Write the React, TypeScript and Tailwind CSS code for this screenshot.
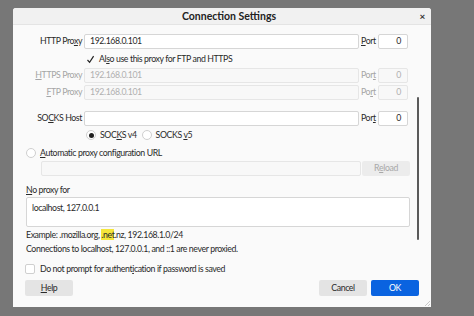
const U = ({ children }: { children: string }) => <span className="underline underline-offset-[1px]">{children}</span>;

const Field = ({ value = '', disabled = false, className = '' }: { value?: string; disabled?: boolean; className?: string }) => (
  <div
    className={`h-[15px] flex items-center px-[5px] border rounded-[2px] ${
      disabled ? 'bg-[#f8f8f8] border-[#e6e6e6] text-[#b0b0b0]' : 'bg-white border-[#d6d6d6] text-[#2a2a2a]'
    } ${className}`}
  >
    {value}
  </div>
);

const PortField = ({ disabled = false }: { disabled?: boolean }) => (
  <div
    className={`w-[30px] h-[15px] flex items-center justify-end pr-[6px] border rounded-[2px] ${
      disabled ? 'bg-[#f8f8f8] border-[#e6e6e6] text-[#b0b0b0]' : 'bg-white border-[#d6d6d6] text-[#2a2a2a]'
    }`}
  >
    0
  </div>
);

const ProxyRow = ({ label, value, disabled = false, port }: { label: React.ReactNode; value: string; disabled?: boolean; port: React.ReactNode }) => (
  <div className="flex items-center h-[15px]">
    <div className={`w-[71px] pr-[2px] text-right ${disabled ? 'text-[#a5a5a5]' : 'text-[#2a2a2a]'}`}>{label}</div>
    <Field value={value} disabled={disabled} className="w-[275px]" />
    <div className={`w-[19px] pl-[2px] ${disabled ? 'text-[#a5a5a5]' : 'text-[#2a2a2a]'}`}>{port}</div>
    <PortField disabled={disabled} />
  </div>
);

const Radio = ({ checked = false }: { checked?: boolean }) => (
  <div className="w-[10px] h-[10px] rounded-full border border-[#cfcfcf] bg-white flex items-center justify-center">
    {checked && <div className="w-[5px] h-[5px] rounded-full bg-[#1e1e1e]" />}
  </div>
);

export default function App() {
  return (
    <div
      className="w-[474px] h-[316px] bg-[#777777] pt-[8px] pl-[13px] overflow-hidden text-[8.75px] leading-none tracking-[-0.4px]"
      style={{ fontFamily: 'Lato, "Noto Sans", sans-serif' }}
    >
      <div className="w-[418px] h-[299px] bg-[#fafafa] rounded-t-[3px] flex flex-col relative">
        {/* title bar */}
        <div className="h-[17px] bg-[#f1f1f1] border-b border-[#e4e4e4] rounded-t-[3px] flex items-center justify-center relative">
          <span className="font-bold text-[10.5px] tracking-[0px] text-[#222] ml-[14px]">Connection Settings</span>
          <span className="absolute right-[6px] top-[3px] text-[10px] font-bold text-[#333]">×</span>
        </div>

        {/* scrollbar */}
        <div className="absolute left-[404px] top-[89px] w-[2px] h-[143px] bg-[#5a5a5a] rounded-full" />

        <div className="flex flex-col">
          <div className="mt-[9px]">
            <ProxyRow label={<>HTTP Pro<U>x</U>y</>} value="192.168.0.101" port={<><U>P</U>ort</>} />
          </div>

          <div className="mt-[4px] h-[12px] flex items-center pl-[73px] text-[#2a2a2a]">
            <svg width="9" height="9" viewBox="0 0 9 9" className="mr-[4px]">
              <path d="M1.5 5 L3.6 7.3 L7.6 1.2" fill="none" stroke="#222" strokeWidth="1.2" />
            </svg>
            <span>Al<U>s</U>o use this proxy for FTP and HTTPS</span>
          </div>

          <div className="mt-[3px]">
            <ProxyRow label={<><U>H</U>TTPS Proxy</>} value="192.168.0.101" disabled port={<>Por<U>t</U></>} />
          </div>
          <div className="mt-[2px]">
            <ProxyRow label={<><U>F</U>TP Proxy</>} value="192.168.0.101" disabled port={<>Po<U>r</U>t</>} />
          </div>

          <div className="mt-[11px]">
            <ProxyRow label={<>SO<U>C</U>KS Host</>} value="" port={<>Por<U>t</U></>} />
          </div>

          <div className="mt-[3px] h-[12px] flex items-center pl-[73px] text-[#2a2a2a]">
            <Radio checked />
            <span className="ml-[4px] mr-[5px]">SOC<U>K</U>S v4</span>
            <Radio />
            <span className="ml-[4px]">SOCKS <U>v</U>5</span>
          </div>

          <div className="mt-[6px] h-[12px] flex items-center pl-[13px] text-[#2a2a2a]">
            <Radio />
            <span className="ml-[4px]"><U>A</U>utomatic proxy configuration URL</span>
          </div>

          <div className="mt-[2px] flex items-center pl-[28px]">
            <Field disabled className="w-[320px]" />
            <div className="ml-[1px] w-[48px] h-[15px] bg-[#ececec] rounded-[2px] flex items-center justify-center text-[#a8a8a8]">
              R<U>e</U>load
            </div>
          </div>

          <div className="mt-[8px] h-[12px] flex items-center pl-[13px] text-[#2a2a2a]">
            <span><U>N</U>o proxy for</span>
          </div>

          <div className="mt-[1px] ml-[13px] w-[384px] h-[30px] bg-white border border-[#d6d6d6] rounded-[2px] px-[5px] pt-[6px] text-[#2a2a2a]">
            localhost, 127.0.0.1
          </div>

          <div className="mt-[2px] h-[12px] flex items-center pl-[13px] text-[#2a2a2a]">
            <span>
              Example: .mozilla.org, <span className="bg-[#f5e63a]">.net</span>.nz, 192.168.1.0/24
            </span>
          </div>
          <div className="mt-[2px] h-[12px] flex items-center pl-[13px] text-[#2a2a2a]">
            <span>Connections to localhost, 127.0.0.1, and ::1 are never proxied.</span>
          </div>

          <div className="mt-[8px] h-[12px] flex items-center pl-[12px] text-[#2a2a2a]">
            <div className="w-[10px] h-[10px] rounded-[2px] border border-[#cfcfcf] bg-white" />
            <span className="ml-[5px]">Do not prompt for authent<U>i</U>cation if password is saved</span>
          </div>

          <div className="mt-[5px] flex items-center pl-[12px] pr-[12px]">
            <div className="w-[48px] h-[16px] bg-[#e4e4e4] rounded-[2px] flex items-center justify-center text-[#2a2a2a]">
              <U>H</U>elp
            </div>
            <div className="flex-1" />
            <div className="w-[48px] h-[16px] bg-[#e4e4e4] rounded-[2px] flex items-center justify-center text-[#2a2a2a]">
              Cancel
            </div>
            <div className="ml-[4px] w-[48px] h-[16px] bg-[#0a63e0] rounded-[2px] flex items-center justify-center text-white">
              OK
            </div>
          </div>
        </div>

        {/* resize grip */}
        <svg width="8" height="8" viewBox="0 0 8 8" className="absolute right-0 bottom-0">
          <path d="M7 2 L2 7 M7 5 L5 7" stroke="#bdbdbd" strokeWidth="0.8" />
        </svg>
      </div>
    </div>
  );
}
